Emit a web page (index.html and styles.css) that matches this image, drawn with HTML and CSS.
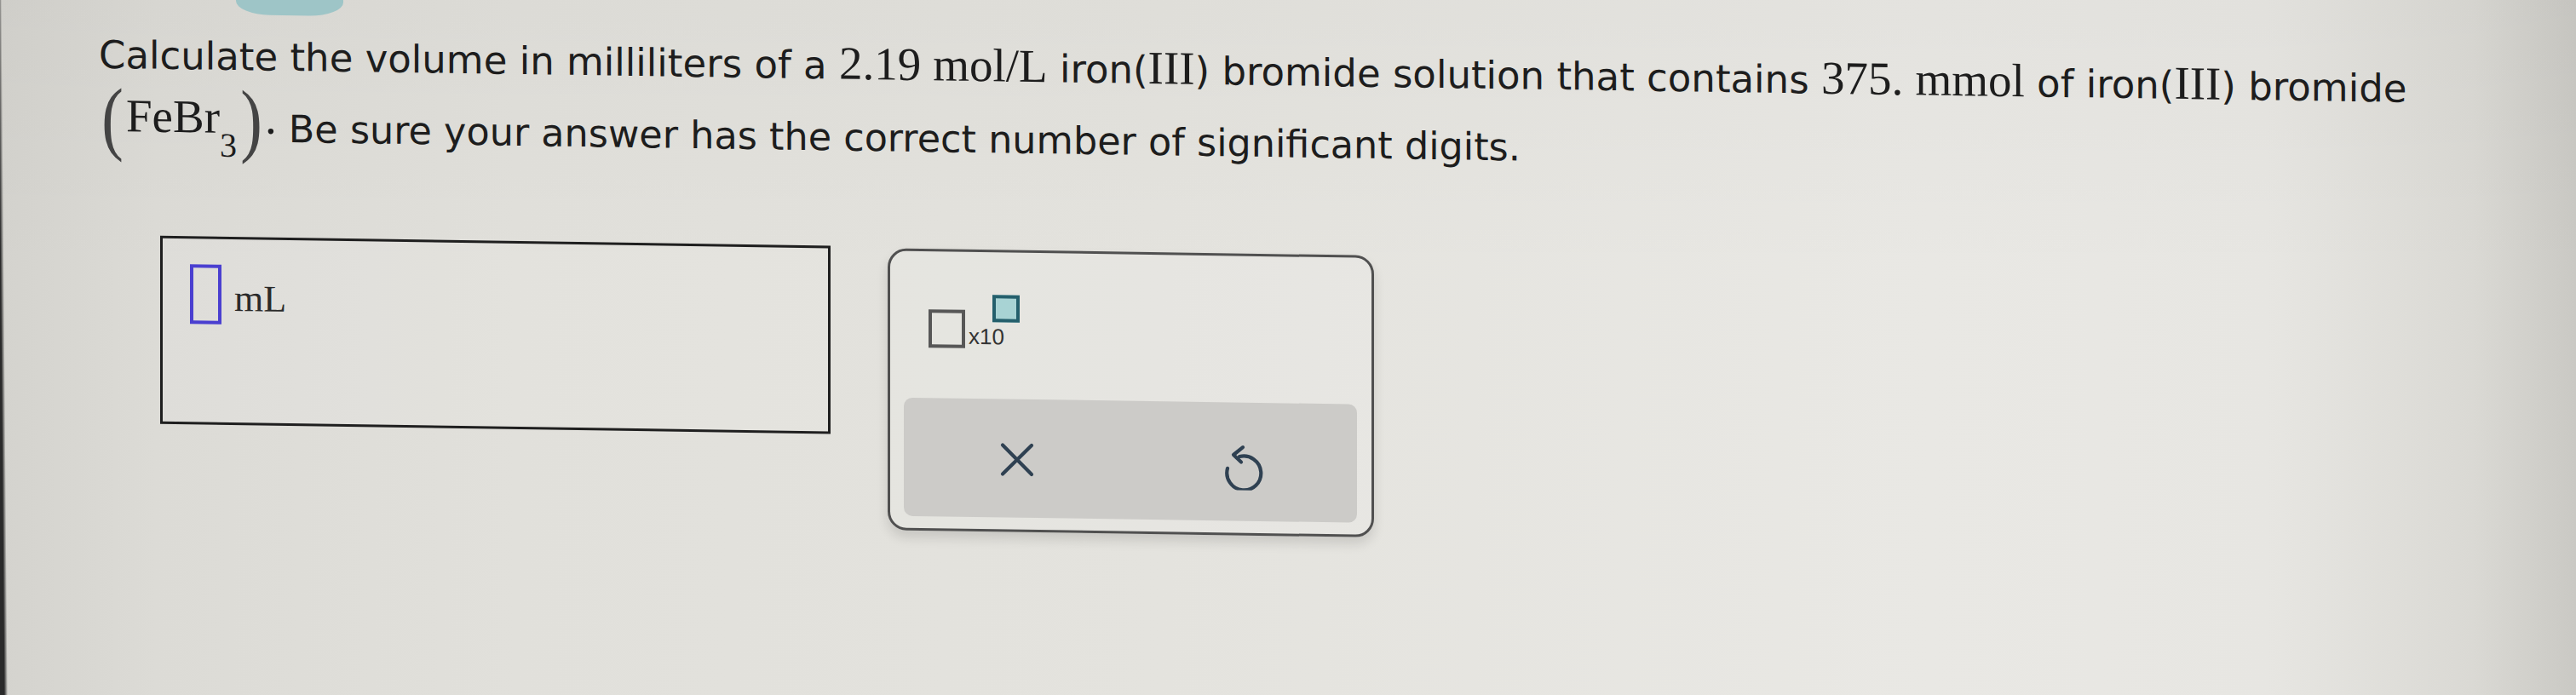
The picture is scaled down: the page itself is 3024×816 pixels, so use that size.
FILE: index.html
```html
<!DOCTYPE html>
<html lang="en">
<head>
<meta charset="utf-8">
<title>Volume calculation</title>
<link rel="stylesheet" href="styles.css">
</head>
<body>
<div class="page">
  <div class="topbar"><div class="tab"></div></div>
  <div class="q">
    <div class="line l1">Calculate the volume in milliliters of a <span class="m">2.19</span><span class="m gap">mol/L</span> iron(<span class="m">III</span>) bromide solution that contains <span class="m">375.</span> <span class="m">mmol</span> of iron(<span class="m">III</span>) bromide</div>
    <div class="line l2"><span class="m raise"><span class="paren">(</span>FeBr<span class="sub">3</span><span class="paren rp">)</span>.</span> Be sure your answer has the correct number of significant digits.</div>
  </div>
  <div class="work">
    <div class="answer">
      <div class="cursor"></div>
      <div class="ml">mL</div>
    </div>
    <div class="panel">
      <div class="sci">
        <div class="base-box"></div>
        <div class="x10">x10</div>
        <div class="exp-box"></div>
      </div>
      <div class="bar">
        <div class="btn">
          <svg class="icon-x" width="40" height="40" viewBox="0 0 40 40"><path d="M3 3 L37 37 M37 3 L3 37" fill="none" stroke="#2f4152" stroke-width="4.2" stroke-linecap="round"/></svg>
        </div>
        <div class="btn">
          <svg class="icon-undo" width="46" height="54" viewBox="0 0 46 54"><path d="M4 28.5 A20 20 0 1 0 18 14.5" fill="none" stroke="#2f4152" stroke-width="4.2" stroke-linecap="round"/><path d="M22 3.5 L11 12.5 L20 21" fill="none" stroke="#2f4152" stroke-width="4.2" stroke-linecap="round" stroke-linejoin="round"/></svg>
        </div>
      </div>
    </div>
  </div>
</div>
</body>
</html>
```
FILE: styles.css
```css
html, body {
  margin: 0;
  padding: 0;
}
body {
  width: 3024px;
  height: 816px;
  overflow: hidden;
  font-family: "DejaVu Sans", Verdana, sans-serif;
  color: #1d1d1d;
  background:
    linear-gradient(89.5deg, #2a2a2a 0, #2a2a2a 5px, rgba(42,42,42,0) 9px),
    linear-gradient(to bottom, rgba(0,0,0,0.025), rgba(0,0,0,0) 40%),
    linear-gradient(to right, #d4d3ce 0, #dcdbd6 6%, #e1e0db 20%, #e4e3de 45%, #e9e8e4 75%, #e7e6e2 88%, #dad9d4 96%, #cac9c4 100%);
}
.page {
  transform: skewY(0.85deg);
  transform-origin: 0 0;
  padding-left: 116px;
}
.topbar {
  display: flex;
  height: 21px;
}
.tab {
  margin-left: 161px;
  margin-top: -10px;
  width: 126px;
  height: 23px;
  background: #9ec5c7;
  border-radius: 0 0 40px 40px / 0 0 16px 16px;
}
.q {
  white-space: nowrap;
}
.line {
  height: 84px;
  line-height: 84px;
}
.l1 {
  font-size: 45px;
}
.l2 {
  font-size: 44.5px;
}
.m {
  font-family: "Liberation Serif", "Times New Roman", serif;
  font-size: 55px;
  line-height: 1;
}
.gap {
  margin-left: 14px;
}
.raise {
  position: relative;
  top: -10px;
}
.paren {
  display: inline-block;
  font-size: 96px;
  line-height: 0;
  vertical-align: -16px;
  color: #444;
  transform: scaleX(0.8);
}
.rp {
  margin-left: 1px;
}
.sub {
  font-size: 40px;
  line-height: 0;
  vertical-align: -28px;
}
.work {
  display: flex;
  align-items: flex-start;
  margin: 85px 0 0 72px;
}
.answer {
  box-sizing: border-box;
  width: 787px;
  height: 221px;
  border: 3px solid #1f1f1f;
  padding: 30px 0 0 32px;
  display: flex;
  align-items: flex-start;
  background: rgba(255,255,255,0.08);
}
.cursor {
  box-sizing: border-box;
  width: 37px;
  height: 70px;
  border: 4px solid #4a3fd0;
}
.ml {
  font-family: "Liberation Serif", "Times New Roman", serif;
  font-size: 44px;
  line-height: 44px;
  margin: 18px 0 0 15px;
  color: #2a2a2a;
}
.panel {
  box-sizing: border-box;
  width: 571px;
  height: 331px;
  margin: 2px 0 0 67px;
  border: 3px solid #505050;
  border-radius: 22px;
  display: flex;
  flex-direction: column;
  padding: 0 17px 14px 16px;
  background: rgba(255,255,255,0.1);
  box-shadow: 0 8px 14px rgba(0,0,0,0.12);
}
.sci {
  box-sizing: border-box;
  height: 172px;
  padding: 50px 0 0 29px;
  display: flex;
  align-items: flex-start;
}
.base-box {
  box-sizing: border-box;
  width: 43px;
  height: 45px;
  border: 4px solid #575757;
  margin-top: 18px;
}
.x10 {
  font-family: "Liberation Sans", Arial, sans-serif;
  font-size: 26px;
  line-height: 26px;
  margin: 36px 0 0 4px;
  color: #333;
}
.exp-box {
  box-sizing: border-box;
  width: 32px;
  height: 32px;
  border: 4px solid #245f6c;
  background: #a8d3d4;
  margin-left: -14px;
}
.bar {
  flex: 1;
  display: flex;
  background: #cccbc8;
  border-radius: 10px;
}
.btn {
  flex: 1;
  display: flex;
  align-items: center;
  justify-content: center;
}
.icon-x {
  margin-top: 3px;
}
.icon-undo {
  margin-top: 13px;
}
```
